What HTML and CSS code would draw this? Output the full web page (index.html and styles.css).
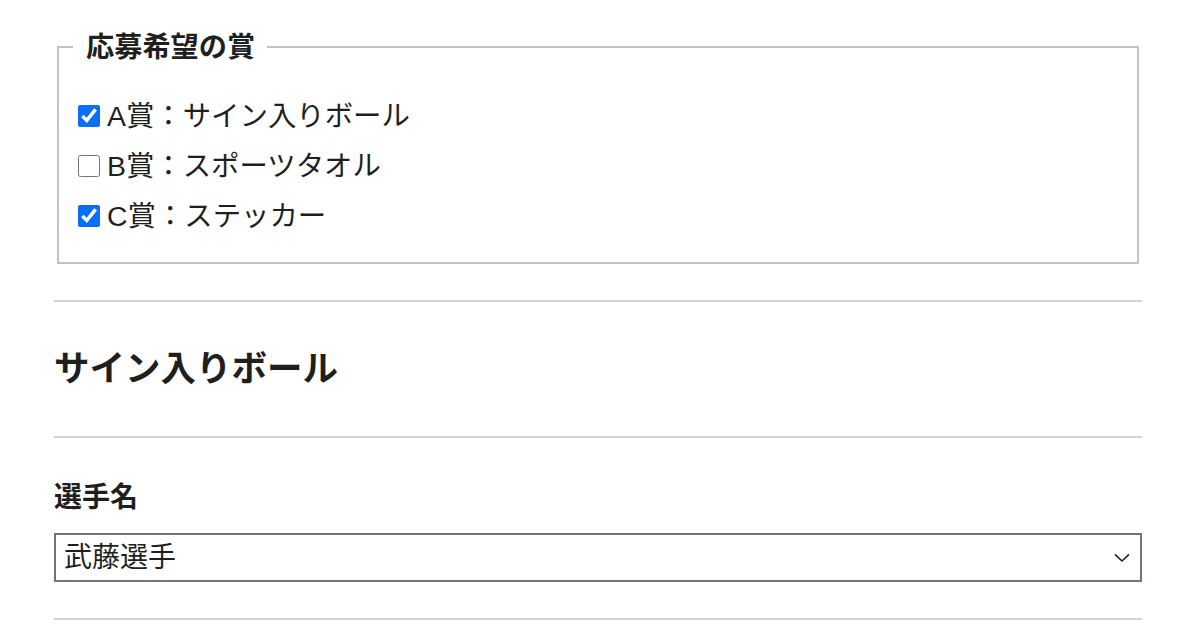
FILE: index.html
```html
<!DOCTYPE html>
<html lang="ja">
<head>
<meta charset="utf-8">
<title>応募フォーム</title>
<link rel="stylesheet" href="styles.css">
</head>
<body>
<main class="form">
  <fieldset class="prizes">
    <legend class="prizes-title">応募希望の賞</legend>
    <label class="option"><input type="checkbox" class="check" checked><span>A賞：サイン入りボール</span></label>
    <label class="option"><input type="checkbox" class="check"><span>B賞：スポーツタオル</span></label>
    <label class="option"><input type="checkbox" class="check" checked><span>C賞：ステッカー</span></label>
  </fieldset>
  <hr class="rule rule-first">
  <h2 class="section-title">サイン入りボール</h2>
  <hr class="rule">
  <label class="field-label" for="player">選手名</label>
  <div class="select-wrap">
    <select id="player" class="select">
      <option>武藤選手</option>
    </select>
    <svg class="chevron" width="16" height="10" viewBox="0 0 16 10" aria-hidden="true"><path d="M1.5 1.8 L8 8 L14.5 1.8" fill="none" stroke="#222" stroke-width="1.6" stroke-linecap="round" stroke-linejoin="round"/></svg>
  </div>
  <hr class="rule rule-last">
</main>
</body>
</html>
```

FILE: styles.css
```css
html, body {
  margin: 0;
  padding: 0;
  background: #ffffff;
}

body {
  font-family: "Liberation Sans", "Noto Sans CJK JP", sans-serif;
  color: #1f1f1f;
}

.form {
  width: 1088px;
  padding: 27px 0 0 54px;
}

.prizes {
  margin: 0 3px;
  padding: 24px 14px 21px 14px;
  border: 2px solid #c2c2c2;
  min-width: 0;
}

.prizes-title {
  padding: 0 12px 0 13px;
  font-size: 28.2px;
  font-weight: 700;
  line-height: 40px;
  color: #1f1f1f;
}

.option {
  display: flex;
  align-items: center;
  height: 50px;
  padding-left: 5px;
  font-size: 28.4px;
  line-height: 50px;
}

.check {
  width: 22px;
  height: 22px;
  margin: 0 7px 0 0;
  accent-color: #0b6ff5;
}

.rule {
  border: 0;
  height: 2px;
  background: #d3d3d3;
  margin: 0;
}

.rule-first {
  margin-top: 36px;
}

.section-title {
  margin: 42px 0 42px 0;
  font-size: 35.5px;
  font-weight: 700;
  line-height: 50px;
}

.field-label {
  display: block;
  margin-top: 40px;
  font-size: 28px;
  font-weight: 700;
  line-height: 40px;
}

.select-wrap {
  position: relative;
  margin-top: 15px;
}

.select {
  appearance: none;
  -webkit-appearance: none;
  display: block;
  width: 100%;
  height: 49px;
  margin: 0;
  padding: 0 40px 0 8px;
  border: 2px solid #6f7579;
  border-radius: 0;
  background: #ffffff;
  font-family: "Liberation Sans", "Noto Sans CJK JP", sans-serif;
  font-size: 28px;
  color: #1f1f1f;
}

.chevron {
  position: absolute;
  right: 12px;
  top: 20px;
}

.rule-last {
  margin-top: 36px;
}
```
